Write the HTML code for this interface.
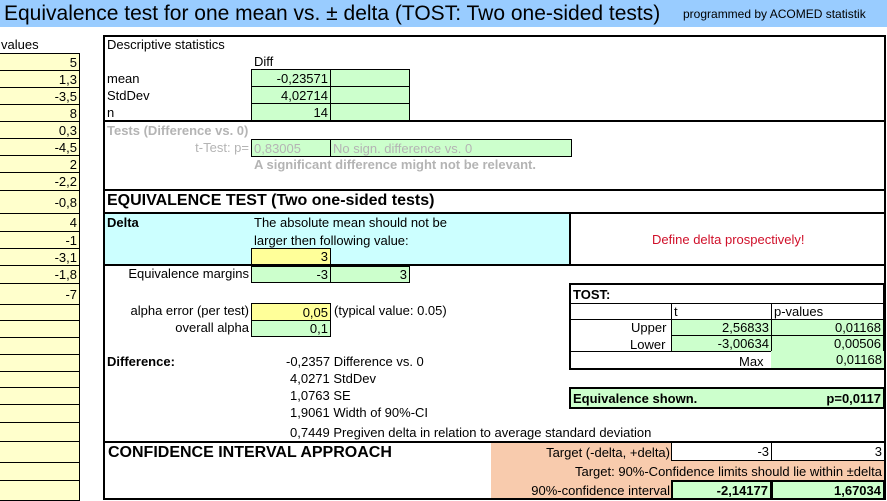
<!DOCTYPE html>
<html><head><meta charset="utf-8"><style>
*{margin:0;padding:0;box-sizing:border-box}
body{width:887px;height:501px;overflow:hidden;background:#fff;font-family:"Liberation Sans",Arial,sans-serif;font-size:13px;color:#000;position:relative}
.a{position:absolute;white-space:nowrap;line-height:1}
.ar{position:absolute;white-space:nowrap;line-height:1;right:638px;text-align:right}
.c{position:absolute;display:flex;align-items:center;white-space:nowrap;overflow:hidden}
.r{justify-content:flex-end;padding-right:2px}
.l{padding-left:2px}
.g{background:#ccffcc;border:1px solid #000}
.y{background:#ffff99;border:1px solid #000}
.b{font-weight:bold}
.gr{color:#b4b4b4}
.hl{position:absolute;background:#000}
</style></head><body>
<div class="c" style="left:0;top:0;width:887px;height:27px;background:#99ccff"></div>
<div class="a" style="left:4px;top:3px;font-size:21px">Equivalence test for one mean vs. ± delta (TOST: Two one-sided tests)</div>
<div class="a" style="left:683px;top:8px;font-size:12px">programmed by ACOMED statistik</div>

<div class="a" style="left:1px;top:38px">values</div>
<div id="lc"></div>

<div style="position:absolute;left:103px;top:35px;width:783px;height:465px;border:2px solid #000"></div>
<div class="hl" style="left:103px;top:120px;width:783px;height:2px"></div>
<div class="hl" style="left:103px;top:189px;width:783px;height:2px"></div>
<div class="hl" style="left:103px;top:212px;width:783px;height:2px"></div>
<div class="hl" style="left:103px;top:264px;width:783px;height:2px"></div>
<div class="hl" style="left:103px;top:441px;width:783px;height:2px"></div>

<div class="a" style="left:107px;top:38px">Descriptive statistics</div>
<div class="a" style="left:254px;top:55px">Diff</div>
<div class="a" style="left:107px;top:72px">mean</div>
<div class="a" style="left:107px;top:89px">StdDev</div>
<div class="a" style="left:107px;top:106px">n</div>
<div class="c g r" style="left:251px;top:69px;width:80px;height:18px">-0,23571</div>
<div class="c g" style="left:330px;top:69px;width:80px;height:18px"></div>
<div class="c g r" style="left:251px;top:86px;width:80px;height:18px">4,02714</div>
<div class="c g" style="left:330px;top:86px;width:80px;height:18px"></div>
<div class="c g r" style="left:251px;top:103px;width:80px;height:18px">14</div>
<div class="c g" style="left:330px;top:103px;width:80px;height:18px"></div>

<div class="a b gr" style="left:107px;top:124px">Tests (Difference vs. 0)</div>
<div class="ar gr" style="top:141px">t-Test: p=</div>
<div class="c g l gr" style="left:251px;top:139px;width:80px;height:18px">0,83005</div>
<div class="c g l gr" style="left:330px;top:139px;width:242px;height:18px">No sign. difference vs. 0</div>
<div class="a b gr" style="left:254px;top:158px">A significant difference might not be relevant.</div>

<div class="a b" style="left:107px;top:193px;font-size:16px">EQUIVALENCE TEST (Two one-sided tests)</div>
<div class="c" style="left:105px;top:214px;width:465px;height:50px;background:#ccffff"></div>
<div class="hl" style="left:569px;top:213px;width:2px;height:52px"></div>
<div class="a b" style="left:107px;top:216px">Delta</div>
<div class="a" style="left:254px;top:216px">The absolute mean should not be</div>
<div class="a" style="left:254px;top:234px">larger then following value:</div>
<div class="c y r" style="left:251px;top:248px;width:80px;height:17px">3</div>
<div class="a" style="left:652px;top:233px;color:#d0102a">Define delta prospectively!</div>

<div class="ar" style="top:267px">Equivalence margins</div>
<div class="c g r" style="left:251px;top:266px;width:80px;height:17px">-3</div>
<div class="c g r" style="left:330px;top:266px;width:80px;height:17px">3</div>

<div class="ar" style="top:304px">alpha error (per test)</div>
<div class="c y r" style="left:251px;top:303px;width:80px;height:18px">0,05</div>
<div class="a" style="left:334px;top:304px">(typical value: 0.05)</div>
<div class="ar" style="top:321px">overall alpha</div>
<div class="c g r" style="left:251px;top:320px;width:80px;height:17px">0,1</div>

<div class="a b" style="left:107px;top:355px">Difference:</div>
<div class="a" style="left:286px;top:355px">-0,2357 Difference vs. 0</div>
<div class="a" style="left:290px;top:372px">4,0271 StdDev</div>
<div class="a" style="left:290px;top:389px">1,0763 SE</div>
<div class="a" style="left:290px;top:406px">1,9061 Width of 90%-CI</div>
<div class="a" style="left:290px;top:426px">0,7449 Pregiven delta in relation to average standard deviation</div>

<div style="position:absolute;left:569px;top:283px;width:316px;height:87px;border:2px solid #000"></div>
<div class="a b" style="left:573px;top:288px">TOST:</div>
<div class="hl" style="left:570px;top:303px;width:315px;height:1px"></div>
<div class="hl" style="left:570px;top:319px;width:315px;height:1px"></div>
<div class="hl" style="left:570px;top:351px;width:315px;height:1px"></div>
<div class="hl" style="left:671px;top:303px;width:1px;height:48px"></div>
<div class="hl" style="left:771px;top:303px;width:1px;height:48px"></div>
<div class="a" style="left:674px;top:305px">t</div>
<div class="a" style="left:774px;top:305px">p-values</div>
<div class="a" style="left:631px;top:321px">Upper</div>
<div class="a" style="left:630px;top:338px">Lower</div>
<div class="a" style="left:739px;top:355px">Max</div>
<div class="c g r" style="left:671px;top:319px;width:101px;height:17px">2,56833</div>
<div class="c g r" style="left:771px;top:319px;width:113px;height:17px">0,01168</div>
<div class="c g r" style="left:671px;top:335px;width:101px;height:17px">-3,00634</div>
<div class="c g r" style="left:771px;top:335px;width:113px;height:17px">0,00506</div>
<div class="c g r" style="left:771px;top:351px;width:113px;height:17px;border:none">0,01168</div>

<div class="c b" style="left:569px;top:387px;width:316px;height:22px;background:#ccffcc;border:2px solid #000;padding:0 2px;justify-content:space-between"><span>Equivalence shown.</span><span>p=0,0117</span></div>

<div class="a b" style="left:108px;top:445px;font-size:16px">CONFIDENCE INTERVAL APPROACH</div>
<div class="c" style="left:491px;top:443px;width:393px;height:55px;background:#f8cbad"></div>
<div class="c r" style="left:491px;top:443px;width:181px;height:18px">Target (-delta, +delta)</div>
<div class="c r" style="left:671px;top:442px;width:101px;height:19px;background:#fff;border:1px solid #000">-3</div>
<div class="c r" style="left:771px;top:442px;width:114px;height:19px;background:#fff;border:1px solid #000">3</div>
<div class="c r" style="left:491px;top:462px;width:393px;height:18px">Target: 90%-Confidence limits should lie within ±delta</div>
<div class="c r" style="left:491px;top:481px;width:181px;height:18px">90%-confidence interval</div>
<div class="c g r b" style="left:671px;top:480px;width:101px;height:20px;border-width:2px">-2,14177</div>
<div class="c g r b" style="left:771px;top:480px;width:114px;height:20px;border-width:2px">1,67034</div>

<script>
var lc=document.getElementById('lc');
var tops=[53,70,87,104,121,138,155,172,190,213,231,248,265,283,304,320,337,354,371,387,404,422,441,462,480,500];
var vals=["5","1,3","-3,5","8","0,3","-4,5","2","-2,2","-0,8","4","-1","-3,1","-1,8","-7"];
var h='';
for(var i=0;i<tops.length-1;i++){
h+='<div class="c r" style="left:0;top:'+tops[i]+'px;width:80px;height:'+(tops[i+1]-tops[i]+1)+'px;background:#ffffcc;border:1px solid #000;border-left:none">'+(vals[i]||'')+'</div>';
}
lc.innerHTML=h;
</script>
</body></html>
